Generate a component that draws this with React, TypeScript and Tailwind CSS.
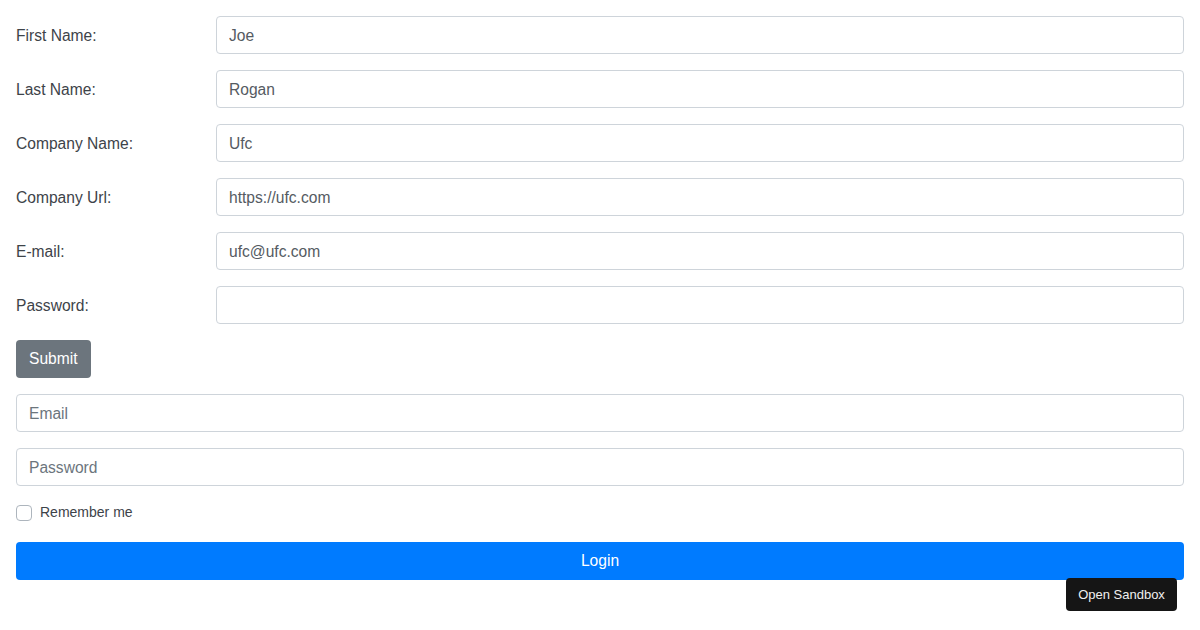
const fields = [
  { label: 'First Name:', value: 'Joe', type: 'text' },
  { label: 'Last Name:', value: 'Rogan', type: 'text' },
  { label: 'Company Name:', value: 'Ufc', type: 'text' },
  { label: 'Company Url:', value: 'https://ufc.com', type: 'text' },
  { label: 'E-mail:', value: 'ufc@ufc.com', type: 'text' },
  { label: 'Password:', value: '', type: 'password' },
]

const inputCls =
  'w-full h-[38px] px-3 pt-[1px] rounded-[4px] border border-[#ced4da] bg-white text-[15.6px] text-[#555b62] placeholder:text-[#6c757d] outline-none'

export default function App() {
  return (
    <div className="relative min-h-[630px] bg-white p-4 text-[#3d4349] font-['Liberation_Sans',Arial,sans-serif]">
      <form className="flex flex-col">
        {fields.map(f => (
          <div key={f.label} className="flex items-center mb-4">
            <label className="w-[200px] shrink-0 text-[15.6px] leading-6 pt-[2px]">{f.label}</label>
            <input type={f.type} defaultValue={f.value} className={inputCls} />
          </div>
        ))}
        <div className="mb-4">
          <button type="button" className="h-[38px] px-[13px] rounded-[4px] bg-[#6c757d] text-white text-[15.6px]">
            Submit
          </button>
        </div>
      </form>

      <form className="flex flex-col">
        <input type="email" placeholder="Email" className={inputCls + ' mb-4'} />
        <input type="password" placeholder="Password" className={inputCls + ' mb-4'} />
        <label className="flex items-center gap-2 h-6 mb-4 text-sm">
          <input
            type="checkbox"
            className="appearance-none w-4 h-4 -mt-[2px] border border-[#adb5bd] rounded-[4px] bg-white"
          />
          <span className="-mt-[4px]">Remember me</span>
        </label>
        <button type="button" className="w-full h-[38px] rounded-[4px] bg-[#007bff] text-white text-[15.6px]">
          Login
        </button>
      </form>

      <button className="absolute right-[23px] bottom-[19px] w-[111px] h-[33px] rounded-[4px] bg-[#151515] text-[13px] text-[#f0f0f0]">
        Open Sandbox
      </button>
    </div>
  )
}
